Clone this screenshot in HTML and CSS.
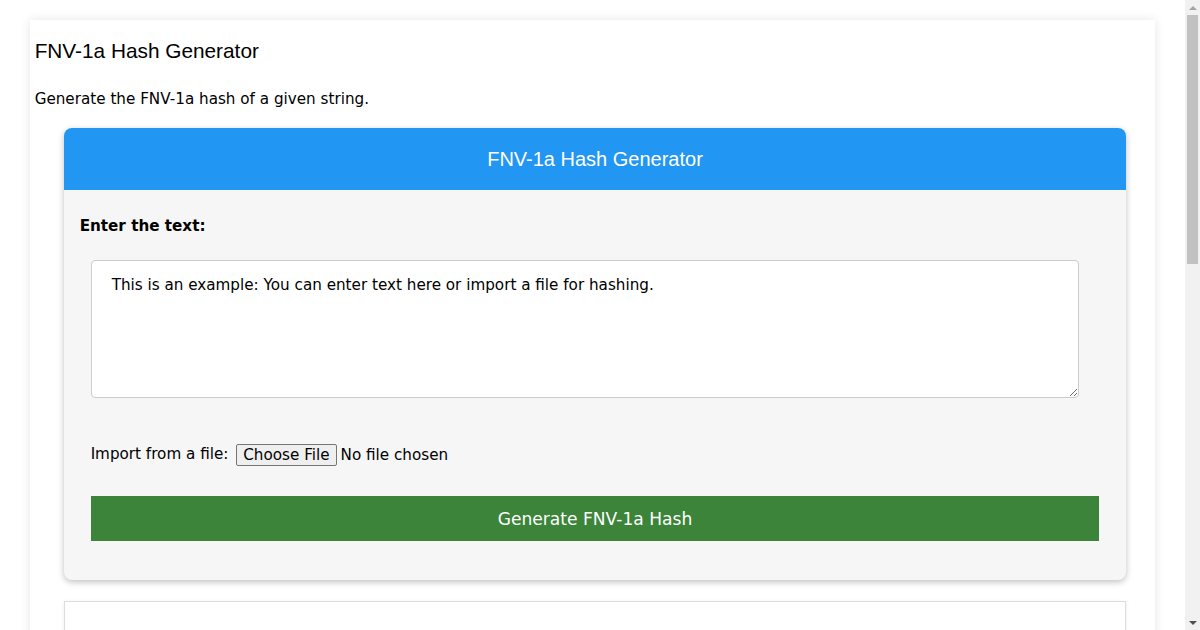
FILE: index.html
```html
<!DOCTYPE html>
<html lang="en">
<head>
<meta charset="utf-8">
<title>FNV-1a Hash Generator</title>
<link rel="stylesheet" href="styles.css">
</head>
<body>
<div class="page">
  <h1 class="page-title">FNV-1a Hash Generator</h1>
  <p class="page-desc">Generate the FNV-1a hash of a given string.</p>

  <div class="card">
    <div class="card-header">FNV-1a Hash Generator</div>
    <div class="card-body">
      <label class="field-label" for="input">Enter the text:</label>
      <div class="form">
        <textarea id="input" class="text-input">This is an example: You can enter text here or import a file for hashing.</textarea>
        <div class="file-row">
          <label for="file">Import from a file:</label> <input type="file" id="file" class="file-input">
        </div>
        <button class="generate-btn" type="button">Generate FNV-1a Hash</button>
      </div>
    </div>
  </div>

  <div class="result-card">
    <div class="result-value"></div>
  </div>
</div>

<div class="scrollbar" aria-hidden="true">
  <div class="scroll-arrow scroll-up"></div>
  <div class="scroll-track"><div class="scroll-thumb"></div></div>
  <div class="scroll-arrow scroll-down"></div>
</div>
</body>
</html>
```

FILE: styles.css
```css
html, body {
  margin: 0;
  padding: 0;
  background: #ffffff;
}

body {
  margin-right: 15px;
  font-family: "DejaVu Sans", Verdana, sans-serif;
  font-size: 15.2px;
  color: #000;
}

.page {
  width: 95%;
  margin: 20px auto;
  padding: 5px 5px 40px;
  box-sizing: border-box;
  background: #ffffff;
  box-shadow: 0 0 10px rgba(0, 0, 0, 0.1);
}

.page-title {
  font-family: "Liberation Sans", Arial, sans-serif;
  font-size: 20.8px;
  font-weight: normal;
  line-height: 24px;
  margin: 14px 0 0;
}

.page-desc {
  margin: 27px 0 0;
  line-height: 19px;
}

.card {
  margin: 19px 24px 0 29px;
  border-radius: 8px;
  background: #f6f6f6;
  box-shadow: 0 2px 6px rgba(0, 0, 0, 0.25);
  overflow: hidden;
}

.card-header {
  background: #2196f3;
  color: #ffffff;
  font-family: "Liberation Sans", Arial, sans-serif;
  font-size: 20px;
  line-height: 22px;
  padding: 20px;
  text-align: center;
}

.card-body {
  padding: 27px 16px 39px;
}

.field-label {
  display: block;
  font-weight: bold;
  line-height: 19px;
}

.form {
  padding: 0 11px;
  margin-top: 24px;
}

.text-input {
  display: block;
  width: 98%;
  height: 138px;
  box-sizing: border-box;
  padding: 15px 20px 13px;
  border: 1px solid #cccccc;
  border-radius: 4px;
  font-family: "DejaVu Sans", Verdana, sans-serif;
  font-size: 15.2px;
  line-height: 19px;
  background: #ffffff;
  color: #000;
  resize: vertical;
}

.file-row {
  margin-top: 45px;
  line-height: 23px;
  height: 23px;
}

.file-input {
  font-family: "DejaVu Sans", Verdana, sans-serif;
  font-size: 15.2px;
  vertical-align: middle;
  margin-left: 3px;
}

.file-input::file-selector-button {
  font: inherit;
  margin-right: 4px;
  padding: 1px 6px;
  border: 1px solid #767676;
  border-radius: 2px;
  background: #efefef;
  color: #000;
}

.generate-btn {
  display: block;
  width: 100%;
  margin-top: 30px;
  height: 45px;
  border: none;
  background: #3b8439;
  color: #ffffff;
  font-family: "DejaVu Sans", Verdana, sans-serif;
  font-size: 17.1px;
}

.result-card {
  margin: 21px 24px 0 29px;
  border: 1px solid #dddddd;
  background: #ffffff;
  padding: 20px;
  box-shadow: 0 1px 4px rgba(0, 0, 0, 0.08);
}

.result-value {
  min-height: 820px;
}

/* browser scrollbar look-alike */
.scrollbar {
  position: fixed;
  top: 0;
  right: 0;
  width: 15px;
  height: 100vh;
  background: #f1f1f1;
  display: flex;
  flex-direction: column;
}

.scroll-arrow {
  height: 15px;
  display: flex;
  align-items: center;
  justify-content: center;
}

.scroll-up::before {
  content: "";
  border-left: 4px solid transparent;
  border-right: 4px solid transparent;
  border-bottom: 4px solid #a3a3a3;
}

.scroll-down::before {
  content: "";
  border-left: 4px solid transparent;
  border-right: 4px solid transparent;
  border-top: 4px solid #505050;
}

.scroll-track {
  flex: 1;
  padding: 0 2px;
}

.scroll-thumb {
  height: 249px;
  background: #c1c1c1;
}
```
